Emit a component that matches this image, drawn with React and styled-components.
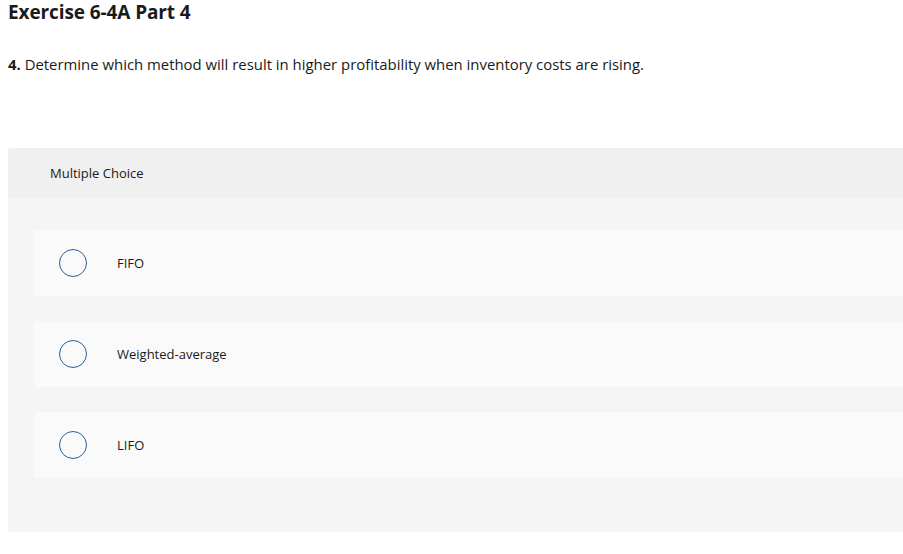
import React from 'react';
import styled, { createGlobalStyle } from 'styled-components';

const GlobalStyle = createGlobalStyle`
    body {
        margin: 0;
        background: #ffffff;
        font-family: "Open Sans", "Liberation Sans", sans-serif;
        color: #1a1a1a;
    }
`;

const Page = styled.div`
    padding: 0 0 0 8px;
`;

const Title = styled.h1`
    margin: 0;
    padding-top: 1px;
    font-size: 19px;
    font-weight: 700;
    line-height: 22px;
    letter-spacing: -0.1px;
    color: #1a1a1a;
`;

const Question = styled.p`
    margin: 31px 0 0;
    font-size: 14.9px;
    line-height: 20px;
    color: #1a1a1a;
    b {
        font-weight: 700;
    }
`;

const Panel = styled.section`
    margin-top: 74px;
    background: #f5f5f5;
    border-radius: 3px 0 0 3px;
    padding-bottom: 54px;
`;

const PanelHeader = styled.div`
    height: 50px;
    display: flex;
    align-items: center;
    padding-left: 42px;
    background: #f0f0f0;
    border-radius: 3px 0 0 0;
    font-size: 13px;
    color: #1a1a1a;
`;

const Options = styled.div`
    display: flex;
    flex-direction: column;
    gap: 25px;
    padding: 32px 0 0 26px;
`;

const Option = styled.label`
    height: 66px;
    display: flex;
    align-items: center;
    background: #fafafa;
    border-radius: 3px 0 0 3px;
    cursor: pointer;
`;

const Radio = styled.span`
    width: 26px;
    height: 26px;
    margin-left: 25px;
    border: 1.5px solid #2a5f95;
    border-radius: 50%;
    flex-shrink: 0;
`;

const OptionText = styled.span`
    margin-left: 30px;
    font-size: 13px;
    color: #1a1a1a;
`;

const choices = ['FIFO', 'Weighted-average', 'LIFO'];

const App = () => (
    <Page>
        <GlobalStyle />
        <Title>Exercise 6-4A Part 4</Title>
        <Question>
            <b>4.</b> Determine which method will result in higher profitability when inventory costs are rising.
        </Question>
        <Panel>
            <PanelHeader>Multiple Choice</PanelHeader>
            <Options>
                {choices.map((c) => (
                    <Option key={c}>
                        <Radio />
                        <OptionText>{c}</OptionText>
                    </Option>
                ))}
            </Options>
        </Panel>
    </Page>
);

export default App;
